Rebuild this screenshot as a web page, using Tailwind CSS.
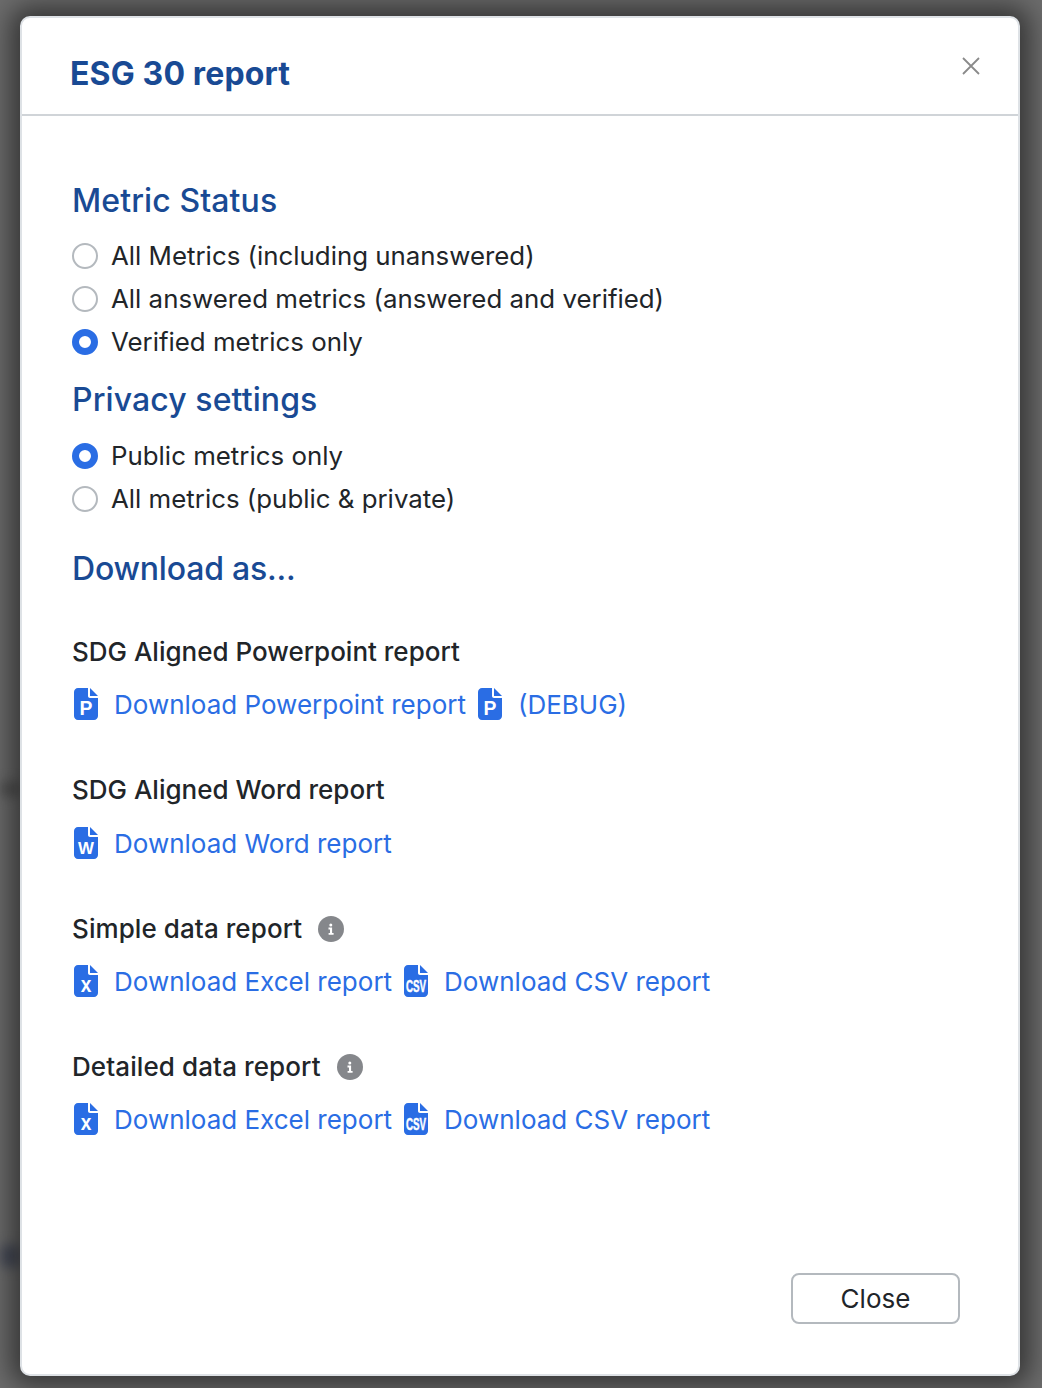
<!DOCTYPE html>
<html lang="en">
<head>
  <meta charset="UTF-8">
  <title>ESG 30 report</title>
  <script src="https://cdn.jsdelivr.net/npm/@tailwindcss/browser@4"></script>
</head>
<body class="relative h-[1388px] w-[1042px] overflow-hidden bg-[#6c6c6c] font-['Inter',sans-serif] text-[#212529]">
  <!-- blurred page behind the backdrop -->
  <div class="absolute left-0 top-[782px] h-[14px] w-[20px] bg-[#505050] blur-[6px]"></div>
  <div class="absolute left-0 top-[1245px] h-[22px] w-[20px] bg-[#474b58] blur-[6px]"></div>

  <!-- Modal -->
  <div class="relative mx-[20px] mt-[16px] flex h-[1360px] w-[1000px] flex-col rounded-[10px] border-2 border-[#dee2e6] bg-white shadow-[0_0_26px_10px_rgba(0,0,0,0.5)]">
    <div class="flex h-[98px] items-start justify-between border-b-2 border-[#d0d4d8] pl-[48px] pr-[38px]">
      <h1 class="mt-[36px] text-[32px] leading-[40px] font-bold tracking-[0.15px] text-[#194a94]">ESG 30 report</h1>
      <svg class="mt-[39px]" width="18" height="18" viewBox="0 0 18 18" fill="none" stroke="#8a8a8a" stroke-width="1.8"><path d="M1 1l16 16M17 1L1 17"/></svg>
    </div>

    <div class="flex flex-1 flex-col pl-[50px] pr-[58px]">
      <h2 class="mt-[65px] text-[32px] leading-[40px] font-medium tracking-[0.1px] text-[#194a94]">Metric Status</h2>
      <div class="mt-[19px] flex flex-col gap-[11px]">
        <label class="flex h-[32px] items-center gap-[13px] text-[25.85px]"><span class="size-[26px] rounded-full border-2 border-[#b4b9be]"></span>All Metrics (including unanswered)</label>
        <label class="flex h-[32px] items-center gap-[13px] text-[25.85px]"><span class="size-[26px] rounded-full border-2 border-[#b4b9be]"></span>All answered metrics (answered and verified)</label>
        <label class="flex h-[32px] items-center gap-[13px] text-[25.85px]"><span class="size-[26px] rounded-full border-[7px] border-[#2a6de4] bg-white"></span>Verified metrics only</label>
      </div>

      <h2 class="mt-[22px] text-[32px] leading-[40px] font-medium tracking-[0.1px] text-[#194a94]">Privacy settings</h2>
      <div class="mt-[20px] flex flex-col gap-[11px]">
        <label class="flex h-[32px] items-center gap-[13px] text-[25.85px]"><span class="size-[26px] rounded-full border-[7px] border-[#2a6de4] bg-white"></span>Public metrics only</label>
        <label class="flex h-[32px] items-center gap-[13px] text-[25.85px]"><span class="size-[26px] rounded-full border-2 border-[#b4b9be]"></span>All metrics (public &amp; private)</label>
      </div>

      <h2 class="mt-[34px] text-[32px] leading-[40px] font-medium tracking-[-0.2px] text-[#194a94]">Download as...</h2>

      <h3 class="mt-[47px] text-[26px] leading-[32px] font-medium">SDG Aligned Powerpoint report</h3>
      <div class="mt-[19px] flex h-[34px] items-center text-[26px] text-[#2a6de4]">
        <svg class="mr-[16px] ml-[2px]" width="24" height="32" viewBox="0 0 384 512"><path fill="#2a6de4" d="M0 64C0 28.7 28.7 0 64 0H224V128c0 17.7 14.3 32 32 32H384V448c0 35.3-28.7 64-64 64H64c-35.3 0-64-28.7-64-64V64zm384 64H256V0L384 128z"/><text x="192" y="436" text-anchor="middle" font-family="Liberation Sans" font-weight="700" font-size="310" fill="#fff">P</text></svg>
        <a>Download Powerpoint report</a>
        <svg class="mr-[16px] ml-[12px]" width="24" height="32" viewBox="0 0 384 512"><path fill="#2a6de4" d="M0 64C0 28.7 28.7 0 64 0H224V128c0 17.7 14.3 32 32 32H384V448c0 35.3-28.7 64-64 64H64c-35.3 0-64-28.7-64-64V64zm384 64H256V0L384 128z"/><text x="192" y="436" text-anchor="middle" font-family="Liberation Sans" font-weight="700" font-size="310" fill="#fff">P</text></svg>
        <a>(DEBUG)</a>
      </div>

      <h3 class="mt-[53px] text-[26px] leading-[32px] font-medium">SDG Aligned Word report</h3>
      <div class="mt-[20px] flex h-[34px] items-center text-[26px] text-[#2a6de4]">
        <svg class="mr-[16px] ml-[2px]" width="24" height="32" viewBox="0 0 384 512"><path fill="#2a6de4" d="M0 64C0 28.7 28.7 0 64 0H224V128c0 17.7 14.3 32 32 32H384V448c0 35.3-28.7 64-64 64H64c-35.3 0-64-28.7-64-64V64zm384 64H256V0L384 128z"/><text x="192" y="436" text-anchor="middle" font-family="Liberation Sans" font-weight="700" font-size="270" fill="#fff">W</text></svg>
        <a>Download Word report</a>
      </div>

      <h3 class="mt-[53px] flex items-center gap-[16px] text-[26px] leading-[32px] font-medium tracking-[0.08px]">Simple data report
        <svg width="26" height="26" viewBox="0 0 26 26"><circle cx="13" cy="13" r="13" fill="#85878b"/><circle cx="12.8" cy="9" r="1.5" fill="#fff"/><path fill="#fff" d="M10.5 11.5h3.6v5.4h1.5v1.9h-5v-1.9h1.4v-3.5h-1.5z"/></svg>
      </h3>
      <div class="mt-[19px] flex h-[34px] items-center text-[26px] text-[#2a6de4]">
        <svg class="mr-[16px] ml-[2px]" width="24" height="32" viewBox="0 0 384 512"><path fill="#2a6de4" d="M0 64C0 28.7 28.7 0 64 0H224V128c0 17.7 14.3 32 32 32H384V448c0 35.3-28.7 64-64 64H64c-35.3 0-64-28.7-64-64V64zm384 64H256V0L384 128z"/><text x="192" y="436" text-anchor="middle" textLength="170" lengthAdjust="spacingAndGlyphs" font-family="Liberation Sans" font-weight="700" font-size="350" fill="#fff">x</text></svg>
        <a>Download Excel report</a>
        <svg class="mr-[16px] ml-[12px]" width="24" height="32" viewBox="0 0 384 512"><path fill="#2a6de4" d="M0 64C0 28.7 28.7 0 64 0H224V128c0 17.7 14.3 32 32 32H384V448c0 35.3-28.7 64-64 64H64c-35.3 0-64-28.7-64-64V64zm384 64H256V0L384 128z"/><text transform="translate(192 432) scale(0.92 1.55)" text-anchor="middle" font-family="Liberation Sans" font-weight="700" font-size="170" fill="#fff" stroke="#fff" stroke-width="5">CSV</text></svg>
        <a>Download CSV report</a>
      </div>

      <h3 class="mt-[53px] flex items-center gap-[16px] text-[26px] leading-[32px] font-medium tracking-[0.1px]">Detailed data report
        <svg width="26" height="26" viewBox="0 0 26 26"><circle cx="13" cy="13" r="13" fill="#85878b"/><circle cx="12.8" cy="9" r="1.5" fill="#fff"/><path fill="#fff" d="M10.5 11.5h3.6v5.4h1.5v1.9h-5v-1.9h1.4v-3.5h-1.5z"/></svg>
      </h3>
      <div class="mt-[19px] flex h-[34px] items-center text-[26px] text-[#2a6de4]">
        <svg class="mr-[16px] ml-[2px]" width="24" height="32" viewBox="0 0 384 512"><path fill="#2a6de4" d="M0 64C0 28.7 28.7 0 64 0H224V128c0 17.7 14.3 32 32 32H384V448c0 35.3-28.7 64-64 64H64c-35.3 0-64-28.7-64-64V64zm384 64H256V0L384 128z"/><text x="192" y="436" text-anchor="middle" textLength="170" lengthAdjust="spacingAndGlyphs" font-family="Liberation Sans" font-weight="700" font-size="350" fill="#fff">x</text></svg>
        <a>Download Excel report</a>
        <svg class="mr-[16px] ml-[12px]" width="24" height="32" viewBox="0 0 384 512"><path fill="#2a6de4" d="M0 64C0 28.7 28.7 0 64 0H224V128c0 17.7 14.3 32 32 32H384V448c0 35.3-28.7 64-64 64H64c-35.3 0-64-28.7-64-64V64zm384 64H256V0L384 128z"/><text transform="translate(192 432) scale(0.92 1.55)" text-anchor="middle" font-family="Liberation Sans" font-weight="700" font-size="170" fill="#fff" stroke="#fff" stroke-width="5">CSV</text></svg>
        <a>Download CSV report</a>
      </div>

      <div class="mt-auto mb-[50px] flex justify-end">
        <button class="h-[51px] w-[169px] rounded-[8px] border-2 border-[#b4b9be] bg-white text-[26px] text-[#212529]">Close</button>
      </div>
    </div>
  </div>
</body>
</html>
